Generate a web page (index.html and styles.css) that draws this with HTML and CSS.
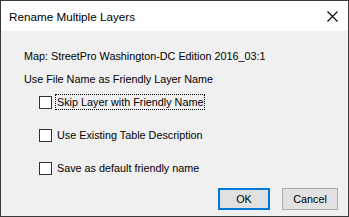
FILE: index.html
```html
<!DOCTYPE html>
<html lang="en">
<head>
  <meta charset="UTF-8">
  <title>Rename Multiple Layers</title>
  <link rel="stylesheet" href="styles.css">
</head>
<body>
  <div class="dialog">
    <div class="titlebar">
      <span class="title">Rename Multiple Layers</span>
      <span class="close">
        <svg width="11" height="11" viewBox="0 0 11 11">
          <path d="M0.5 0.5 L10.5 10.5 M10.5 0.5 L0.5 10.5" stroke="#000" stroke-width="1.1" fill="none"/>
        </svg>
      </span>
    </div>
    <div class="content">
      <div class="label map">Map: StreetPro Washington-DC Edition 2016_03:1</div>
      <div class="label">Use File Name as Friendly Layer Name</div>
      <div class="options">
        <label class="option">
          <span class="box"></span>
          <span class="text focused">Skip Layer with Friendly Name</span>
        </label>
        <label class="option">
          <span class="box"></span>
          <span class="text">Use Existing Table Description</span>
        </label>
        <label class="option">
          <span class="box"></span>
          <span class="text">Save as default friendly name</span>
        </label>
      </div>
      <div class="buttons">
        <button class="btn default">OK</button>
        <button class="btn">Cancel</button>
      </div>
    </div>
  </div>
</body>
</html>
```

FILE: styles.css
```css
body {
  margin: 0;
  background: #2b2b2b;
  font-family: "Liberation Sans", Arial, sans-serif;
  font-size: 10.8px;
  color: #000;
}

.dialog {
  width: 347px;
  height: 215px;
  border: 1px solid #3a3a3a;
  background: #f0f0f0;
  display: flex;
  flex-direction: column;
}

.titlebar {
  height: 30px;
  background: #fff;
  display: flex;
  align-items: center;
  justify-content: space-between;
  padding-left: 8px;
}

.title {
  font-size: 11.7px;
}

.close {
  display: flex;
  margin-right: 10px;
}

.content {
  flex: 1;
  padding: 17px 10px 0 23px;
  display: flex;
  flex-direction: column;
}

.label {
  line-height: 16px;
  height: 16px;
}

.label.map {
  margin-bottom: 7px;
}

.options {
  display: flex;
  flex-direction: column;
  margin-top: 7px;
  padding-left: 15px;
}

.option {
  display: flex;
  align-items: center;
  height: 16px;
  margin-bottom: 16px;
}

.option + .option {
  margin-top: 1px;
}

.box {
  width: 11px;
  height: 11px;
  border: 1px solid #333;
  background: #fff;
  margin-right: 3px;
}

.text {
  line-height: 14px;
  padding: 0 1px;
  border: 1px solid transparent;
}

.text.focused {
  border: 1px dotted #000;
}

.buttons {
  display: flex;
  justify-content: flex-end;
  gap: 12px;
  margin-top: -4px;
}

.btn {
  font-family: inherit;
  font-size: 10.8px;
  height: 22px;
  width: 56px;
  background: #e1e1e1;
  border: 1px solid #adadad;
  padding: 0;
  color: #000;
}

.btn.default {
  width: 52px;
  border: 2px solid #0078d7;
}
```
